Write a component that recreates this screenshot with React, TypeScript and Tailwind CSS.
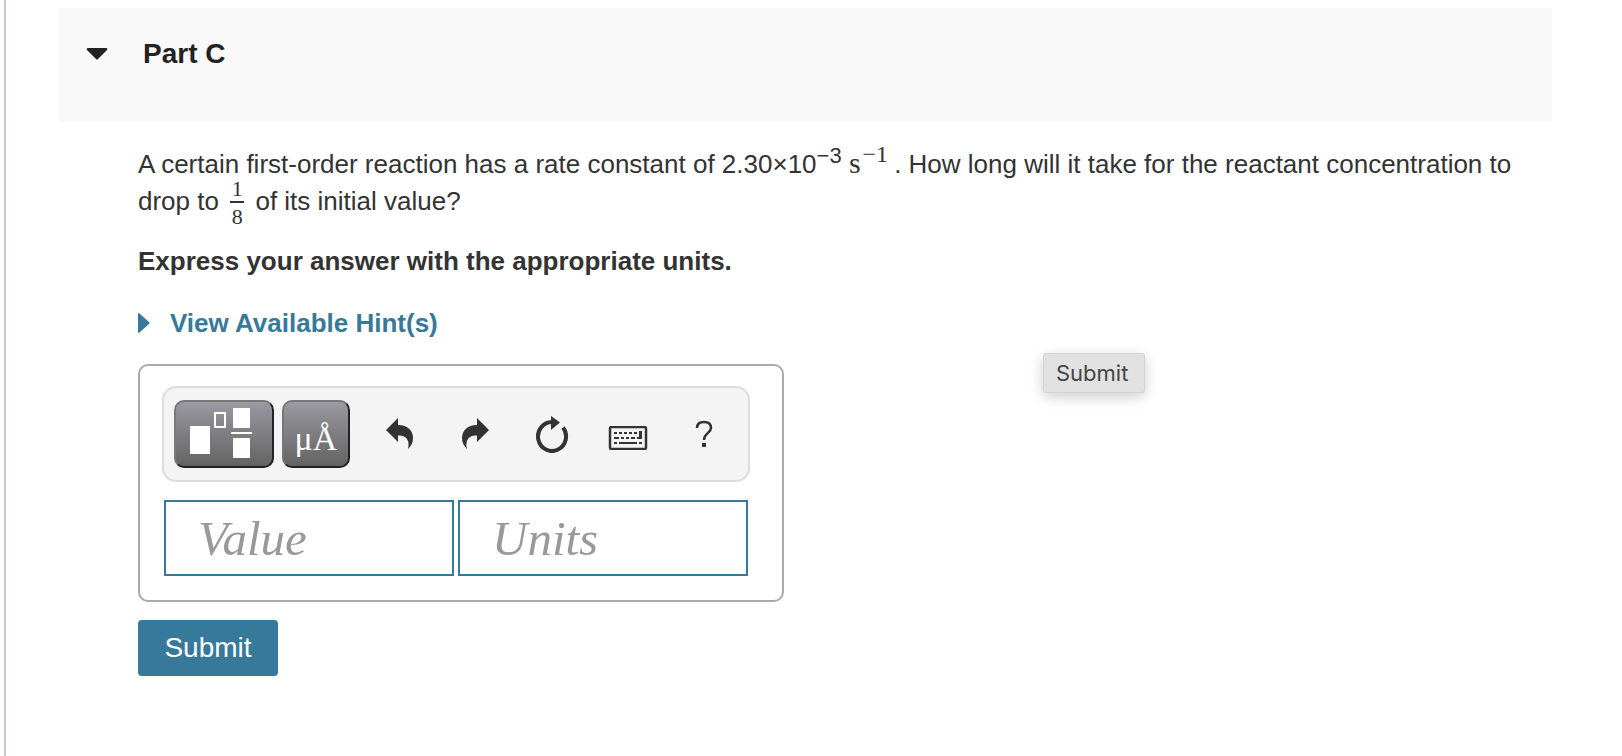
import type { ReactNode } from "react";

function ToolButton({ label, children }: { label: string; children: ReactNode }) {
  return (
    <button type="button" aria-label={label} className="flex h-17 w-13 items-center justify-center text-[#333]">
      {children}
    </button>
  );
}

function Toolbar() {
  return (
    <div className="flex items-center rounded-[14px] border-2 border-[#ddd] bg-[#f4f4f4] px-2.5 py-3">
      <button
        type="button"
        aria-label="Templates"
        className="h-17 w-25 rounded-[10px] border-2 border-t-[#777] border-r-[#222] border-b-[#222] border-l-[#777] bg-linear-to-b from-[#9b99a2] to-[#636363]"
      >
        <svg width="96" height="64" viewBox="0 0 96 64" fill="#fff">
          <rect x="14" y="24" width="20" height="28" />
          <rect x="39" y="11" width="10" height="14" fill="none" stroke="#fff" strokeWidth="2" />
          <rect x="57" y="6" width="17" height="20" />
          <rect x="55" y="30" width="21" height="2" />
          <rect x="57" y="36" width="17" height="20" />
        </svg>
      </button>
      <button
        type="button"
        aria-label="Symbols"
        className="ml-2 h-17 w-17 rounded-[10px] border-2 border-t-[#777] border-r-[#222] border-b-[#222] border-l-[#777] bg-linear-to-b from-[#9b99a2] to-[#636363] pt-2.5 font-['Liberation_Serif',serif] text-[34px] leading-8 text-white"
      >
        μÅ
      </button>

      <div className="ml-6 flex gap-6">
        <ToolButton label="Undo">
          <svg width="28" height="32" viewBox="0 0 28 32" fill="currentColor">
            <path d="M0 12 12 0V7C22 7 27 13 27 20C27 25 25 28 22 31C24 23 21 17 12 17.500V24Z" />
          </svg>
        </ToolButton>
        <ToolButton label="Redo">
          <svg width="28" height="32" viewBox="0 0 28 32" fill="currentColor">
            <path d="M27 12 15 0V7C5 7 0 13 0 20C0 25 2 28 5 31C3 23 6 17 15 17.500V24Z" />
          </svg>
        </ToolButton>
        <ToolButton label="Reset">
          <svg width="34" height="38" viewBox="0 0 34 38" fill="none">
            <path d="M17 7A14 14.500 0 1 0 28 12.500" stroke="currentColor" strokeWidth="4" />
            <path d="M16 1 25 7.500 16 15Z" fill="currentColor" />
          </svg>
        </ToolButton>
        <ToolButton label="Keyboard shortcuts">
          <svg className="mt-2" width="40" height="24" viewBox="0 0 40 24" fill="currentColor">
            <rect x="2" y="1" width="36" height="22" rx="1.500" fill="none" stroke="currentColor" strokeWidth="2.500" />
            <path d="M6 6h3v2H6zM11 6h3v2h-3zM16 6h3v2h-3zM21 6h3v2h-3zM26 6h3v2h-3zM31 5h3v8h-5v-2h2zM6 11h5v2H6zM13 11h3v2h-3zM18 11h3v2h-3zM23 11h4v2h-4zM6 16h3v2H6zM11 16h18v2H11zM31 16h3v2h-3z" />
          </svg>
        </ToolButton>
        <ToolButton label="Help">
          <svg width="18" height="28" viewBox="0 0 18 28" fill="none">
            <path d="M2 8C2 4 5 2 9 2S16 4 16 8C16 13 9 13 9 20" stroke="currentColor" strokeWidth="2.500" />
            <rect x="7" y="23" width="4" height="4" fill="currentColor" />
          </svg>
        </ToolButton>
      </div>
    </div>
  );
}

export default function App() {
  return (
    <div className="relative ml-1 min-h-screen border-l-2 border-[#c0cbe0] bg-white pt-2 pr-17.5 pl-13 font-['Liberation_Sans',Arial,sans-serif] text-[26px] text-[#333]">
      <header className="h-28.5 bg-[#f9f9f9] pt-7 pl-7">
        <h1 className="text-[28px] leading-9 font-bold text-[#222]">
          <button type="button" aria-expanded="true" className="flex items-center">
            <svg width="22" height="12" viewBox="0 0 22 12" fill="currentColor">
              <path d="M2 0H20Q22 0 21 2L12 11Q11 12 10 11L1 2Q0 0 2 0Z" />
            </svg>
            <span className="ml-[35px]">Part C</span>
          </button>
        </h1>
      </header>

      <main className="pt-5 pr-8 pl-20">
        <p className="leading-[37px]">
          A certain first-order reaction has a rate constant of 2.30×10
          <span className="align-[10px] text-[22px] leading-none">−3</span>{" "}
          <span className="font-['Liberation_Serif',serif] text-[30px] leading-none">s</span>
          <span className="ml-0.5 align-[11px] font-['Liberation_Serif',serif] text-[24px] leading-none">−1</span>
          <span className="ml-1.5">.</span> How long will it take for the reactant concentration to drop to{" "}
          <span className="mx-1 -my-2 inline-flex flex-col items-center align-middle font-['Liberation_Serif',serif] text-[22px] leading-5">
            <span>1</span>
            <span className="mt-0.5 w-3.5 border-t-2 border-[#333] pt-1 text-center">8</span>
          </span>{" "}
          of its initial value?
        </p>

        <p className="mt-[25px] leading-8 font-bold">Express your answer with the appropriate units.</p>

        <button type="button" className="mt-7.5 flex items-center leading-8 font-bold text-[#36799b]">
          <svg width="12" height="20" viewBox="0 0 12 20" fill="currentColor">
            <path d="M0 1Q1 -1 2 1L11 9Q12 10 11 11L2 19Q0 21 0 19Z" />
          </svg>
          <span className="ml-5">View Available Hint(s)</span>
        </button>

        <form>
          <div className="mt-[25px] w-fit rounded-[10px] border-2 border-[#aaa] pt-5 pr-8 pb-6 pl-5.5">
            <Toolbar />
            <div className="mt-4.5 flex gap-1 px-0.5 font-['Liberation_Serif',serif] text-[49px] italic">
              <input
                aria-label="Value"
                placeholder="Value"
                className="h-19 w-72.5 border-2 border-[#36799b] px-8 placeholder:text-[#999]"
              />
              <input
                aria-label="Units"
                placeholder="Units"
                className="h-19 w-72.5 border-2 border-[#36799b] px-8 placeholder:text-[#999]"
              />
            </div>
          </div>
          <button type="button" className="mt-4.5 h-14 w-35 rounded-sm bg-[#36799b] text-[28px] text-white">
            Submit
          </button>
        </form>
      </main>

      <div
        role="tooltip"
        className="absolute top-[353px] left-[1037px] rounded-[3px] border border-[#d4d4d4] bg-[#e1e1e1] pr-4 pl-3 font-[Inter,sans-serif] text-[22px] leading-[38px] text-[#444] shadow-[0_4px_14px_rgba(0,0,0,0.2)]"
      >
        Submit
      </div>
    </div>
  );
}
